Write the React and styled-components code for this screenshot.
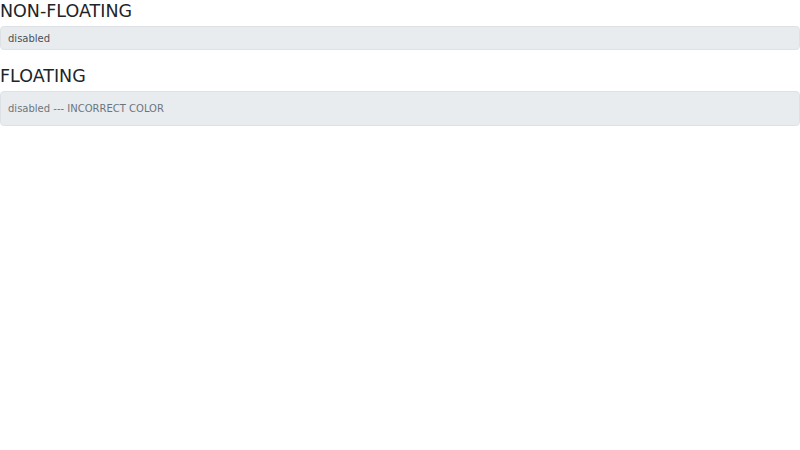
import React from "react";
import styled, { createGlobalStyle } from "styled-components";

const GlobalStyle = createGlobalStyle`
  body {
    margin: 0;
    background: #fff;
    font-family: "DejaVu Sans", sans-serif;
    color: #212529;
  }
`;

const Heading = styled.h4`
  margin: 0 0 3px;
  font-size: 17.5px;
  font-weight: 400;
  line-height: 23px;
`;

const Section = styled.section`
  margin-bottom: ${(p) => p.gap || "0px"};
`;

const Input = styled.input`
  display: block;
  box-sizing: border-box;
  width: 100%;
  height: ${(p) => p.h || "24px"};
  padding: 0 7px;
  font-family: inherit;
  font-size: 10px;
  color: #495057;
  background: #e9ecef;
  border: 1px solid #dee2e6;
  border-radius: 4px;
  outline: none;
`;

const Floating = styled.div`
  position: relative;
`;

const FloatLabel = styled.label`
  position: absolute;
  left: 8px;
  top: 0;
  height: 100%;
  display: flex;
  align-items: center;
  font-size: 10px;
  color: #6c757d;
  pointer-events: none;
`;

export default function App() {
  return (
    <>
      <GlobalStyle />
      <Section gap="15px">
        <Heading>NON-FLOATING</Heading>
        <Input disabled value="disabled" readOnly />
      </Section>
      <Section>
        <Heading>FLOATING</Heading>
        <Floating>
          <Input disabled h="35px" />
          <FloatLabel>disabled --- INCORRECT COLOR</FloatLabel>
        </Floating>
      </Section>
    </>
  );
}
